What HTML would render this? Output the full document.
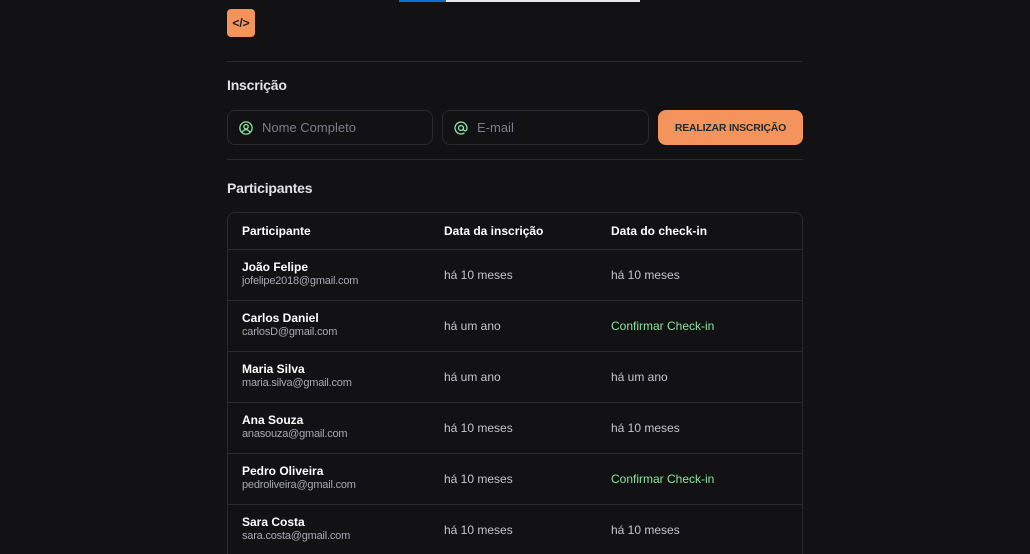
<!DOCTYPE html>
<html><head><meta charset="utf-8">
<style>
*{margin:0;padding:0;box-sizing:border-box}
html{width:1030px;height:554px;overflow:hidden;background:#121214}
body{width:1030px;height:554px;background:#121214;font-family:"Liberation Sans",sans-serif;color:#e1e1e6;overflow:hidden;position:relative}
.bar1{position:absolute;left:399px;top:0;width:47px;height:2px;background:#0a6fd6}
.bar2{position:absolute;left:446px;top:0;width:194px;height:2px;background:#e8e8e8}
.logo{position:absolute;left:227px;top:9px;width:28px;height:28px;border-radius:4px;background:#f4935b;color:#1a1a1a;font-weight:bold;font-size:12px;display:flex;align-items:center;justify-content:center;letter-spacing:0px}
.hr{position:absolute;left:227px;width:576px;height:1px;background:#2a2a2e}
h2{position:absolute;left:227px;font-size:14px;font-weight:bold;color:#e1e1e6;letter-spacing:-0.2px}
.inp{position:absolute;top:110px;height:35px;border:1px solid #29292e;border-radius:8px;display:flex;align-items:center;padding-left:11px;font-size:13px;color:#7c7c8a}
.inp svg{margin-right:9px}
.btn{position:absolute;left:658px;top:110px;width:145px;height:35px;background:#f4935b;border-radius:8px;color:#1e2a33;font-weight:bold;font-size:10.5px;letter-spacing:-0.2px;display:flex;align-items:center;justify-content:center}
.tbl{position:absolute;left:227px;top:212px;width:576px;height:350px;border:1px solid #29292e;border-radius:8px}
.row{position:absolute;left:0;width:574px;border-top:1px solid #29292e}
.c{position:absolute;font-size:12px}
.th{font-weight:bold;font-size:12px;color:#fff}
.n{font-weight:bold;font-size:12px;color:#fff;position:absolute;left:14px}
.e{font-size:11px;color:#a8a8b3;position:absolute;left:14px;letter-spacing:-0.2px}
.d{color:#c4c4cc}
.g{color:#8ce39f}
</style></head><body>
<div class="bar1"></div><div class="bar2"></div>
<div class="logo">&lt;/&gt;</div>
<div class="hr" style="top:61px"></div>
<h2 style="top:77px">Inscrição</h2>
<div class="inp" style="left:227px;width:206px"><svg width="14" height="14" viewBox="0 0 16 16" fill="none" stroke="#8ce39f" stroke-width="1.5"><circle cx="8" cy="8" r="7"/><circle cx="8" cy="6.5" r="2.5"/><path d="M3.5 13c1-2 2.7-3 4.5-3s3.5 1 4.5 3"/></svg>Nome Completo</div>
<div class="inp" style="left:442px;width:207px"><svg width="14" height="14" viewBox="0 0 16 16" fill="none" stroke="#8ce39f" stroke-width="1.5"><circle cx="8" cy="8" r="2.8"/><path d="M10.8 8v1.2a2 2 0 0 0 4 0V8A6.8 6.8 0 1 0 12 13.5"/></svg>E-mail</div>
<div class="btn">REALIZAR INSCRIÇÃO</div>
<div class="hr" style="top:159px"></div>
<h2 style="top:180px">Participantes</h2>
<div class="tbl">
 <div class="c th" style="left:14px;top:11px">Participante</div>
 <div class="c th" style="left:216px;top:11px">Data da inscrição</div>
 <div class="c th" style="left:383px;top:11px">Data do check-in</div>
 <div class="row" style="top:36px;height:51px"><div class="n" style="top:10px">João Felipe</div><div class="e" style="top:25px">jofelipe2018@gmail.com</div><div class="c d" style="left:216px;top:18px">há 10 meses</div><div class="c d" style="left:383px;top:18px">há 10 meses</div></div>
 <div class="row" style="top:87px;height:51px"><div class="n" style="top:10px">Carlos Daniel</div><div class="e" style="top:25px">carlosD@gmail.com</div><div class="c d" style="left:216px;top:18px">há um ano</div><div class="c g" style="left:383px;top:18px">Confirmar Check-in</div></div>
 <div class="row" style="top:138px;height:51px"><div class="n" style="top:10px">Maria Silva</div><div class="e" style="top:25px">maria.silva@gmail.com</div><div class="c d" style="left:216px;top:18px">há um ano</div><div class="c d" style="left:383px;top:18px">há um ano</div></div>
 <div class="row" style="top:189px;height:51px"><div class="n" style="top:10px">Ana Souza</div><div class="e" style="top:25px">anasouza@gmail.com</div><div class="c d" style="left:216px;top:18px">há 10 meses</div><div class="c d" style="left:383px;top:18px">há 10 meses</div></div>
 <div class="row" style="top:240px;height:51px"><div class="n" style="top:10px">Pedro Oliveira</div><div class="e" style="top:25px">pedroliveira@gmail.com</div><div class="c d" style="left:216px;top:18px">há 10 meses</div><div class="c g" style="left:383px;top:18px">Confirmar Check-in</div></div>
 <div class="row" style="top:291px;height:51px"><div class="n" style="top:10px">Sara Costa</div><div class="e" style="top:25px">sara.costa@gmail.com</div><div class="c d" style="left:216px;top:18px">há 10 meses</div><div class="c d" style="left:383px;top:18px">há 10 meses</div></div>
</div>
</body></html>
